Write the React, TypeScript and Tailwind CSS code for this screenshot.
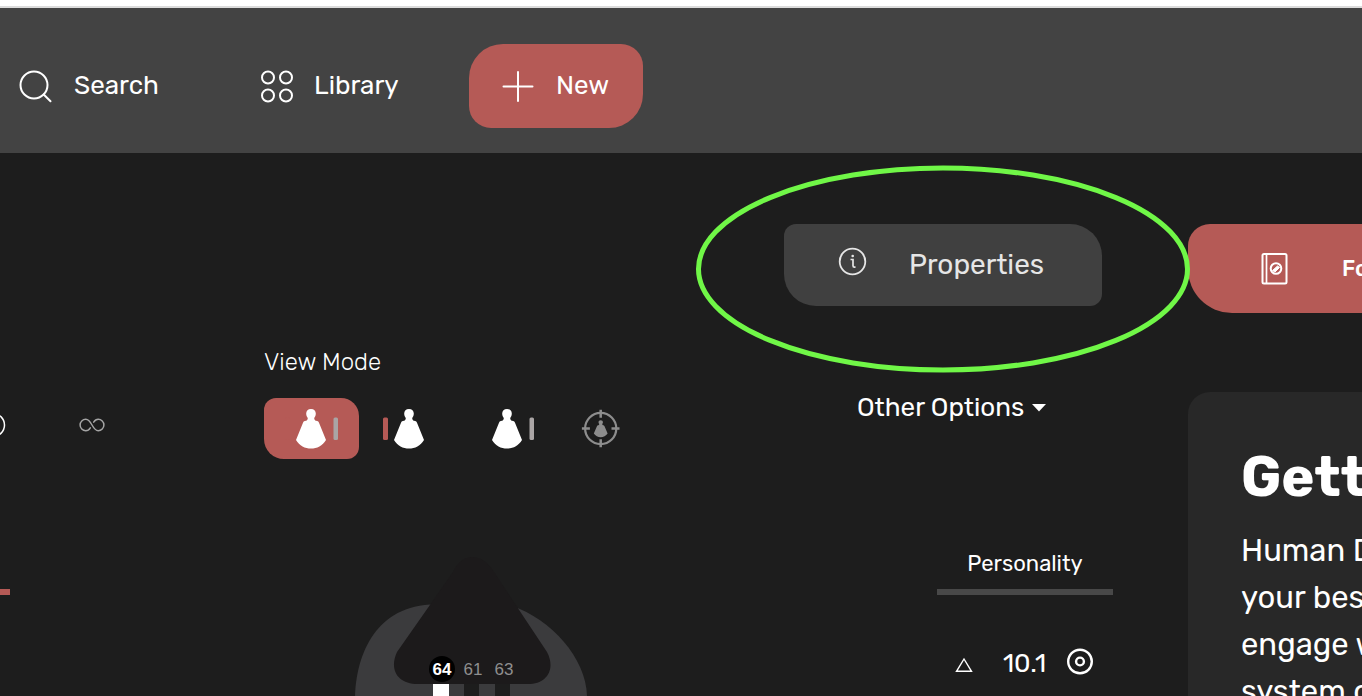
import { clsx } from "clsx";
import { useState } from "react";

// Gown silhouette shared by the view mode buttons, drawn in a 95x61 box
const figurePath =
  "M47 11c-3 0-4.800 2-4.800 4.500 0 1.800.6 3.300 1.600 4.500-.1 1.500-.6 2.400-1.800 2.800-1.600.4-2.400.6-3 1.900L32 42c3.500 5.700 9 8.600 15 8.600s11.500-2.900 15-8.600l-7-17.300c-.6-1.300-1.400-1.500-3-1.900-1.200-.4-1.700-1.300-1.800-2.800 1-1.200 1.600-2.700 1.600-4.500 0-2.500-1.800-4.500-4.800-4.500z";

const viewModes = [
  { id: "both", label: "Design and personality" },
  { id: "design", label: "Design" },
  { id: "personality", label: "Personality" },
  { id: "focus", label: "Focus" },
];

function ViewModeIcon({ id }: { id: string }) {
  if (id === "focus") {
    return (
      <svg viewBox="0 0 95 61" className="h-full w-full" aria-hidden="true">
        <g fill="none" stroke="#8d8d8d">
          <circle cx="42.700" cy="30.500" r="15.600" strokeWidth="2.200" />
          <path
            d="M42.700 11.700v8M42.700 41.300v8M23.900 30.500h8M53.500 30.500h8"
            strokeWidth="2.500"
          />
        </g>
        <g transform="translate(21.100 17.500) scale(0.460 0.430)">
          <path d={figurePath} fill="#8d8d8d" />
        </g>
      </svg>
    );
  }

  return (
    <svg viewBox="0 0 95 61" className="h-full w-full" aria-hidden="true">
      {id !== "personality" && (
        <rect x="21" y="19.500" width="5" height="22.500" rx="1.500" fill="#b55a56" />
      )}
      <path d={figurePath} fill="#fff" />
      {id !== "design" && (
        <rect x="69.500" y="19.500" width="4.500" height="22.500" rx="1.500" fill="#aaa5a5" />
      )}
    </svg>
  );
}

function Header() {
  return (
    <header className="flex h-[145px] items-center bg-[#434343] pt-2.5 pl-[18px]">
      <nav className="flex items-center text-[26px] leading-8">
        <a href="#search" className="flex w-60 items-center gap-5">
          <svg
            viewBox="0 0 36 36"
            className="h-9 w-9"
            fill="none"
            stroke="currentColor"
            strokeWidth="2"
            strokeLinecap="round"
            aria-hidden="true"
          >
            <circle cx="16" cy="17" r="13.500" />
            <path d="M25.700 26.500l6.800 6.800" />
          </svg>
          Search
        </a>
        <a href="#library" className="flex w-[211px] items-center gap-5">
          <svg
            viewBox="0 0 36 36"
            className="h-9 w-9"
            fill="none"
            stroke="currentColor"
            strokeWidth="2"
            aria-hidden="true"
          >
            <circle cx="10" cy="9.500" r="6" />
            <circle cx="28" cy="9.500" r="6" />
            <circle cx="10" cy="27.500" r="6" />
            <circle cx="28" cy="27.500" r="6" />
          </svg>
          Library
        </a>
        <button
          type="button"
          className="flex h-21 w-[174px] items-center gap-5 rounded-tl-[34px] rounded-tr-[22px] rounded-br-[34px] rounded-bl-[22px] bg-[#b55a56] pl-[31px]"
        >
          <svg
            viewBox="0 0 36 36"
            className="h-9 w-9"
            stroke="currentColor"
            strokeWidth="2"
            strokeLinecap="round"
            aria-hidden="true"
          >
            <path d="M18 4v29M3.500 18.500h29" />
          </svg>
          New
        </button>
      </nav>
    </header>
  );
}

function BodyGraph() {
  return (
    <svg viewBox="0 0 252 146" className="ml-20 h-[146px] w-[252px] shrink-0" aria-hidden="true">
      {/* Head outline */}
      <path d="M11 146C12 110 28 58 86 54.500L168 56C207 69 242 108 243 146z" fill="#3b3b3d" />
      {/* Head center */}
      <path
        d="M109 22C118 2 138 2 150 22L203 102C212 119 203 134 184 134H74C53 134 45 119 53 102z"
        fill="#1c1a1b"
      />
      <path d="M89 134h16v12H89z" fill="#fff" />
      <path d="M120 134h15v12h-15zM151 134h15v12h-15z" fill="#1d1d1d" />
      <circle cx="98" cy="119" r="13" fill="#000" />
      <g fontFamily="Liberation Sans, sans-serif" fontSize="17" textAnchor="middle">
        <text x="98" y="125" fill="#fff" fontWeight="700">64</text>
        <text x="129" y="125" fill="#8f8f8f">61</text>
        <text x="160" y="125" fill="#8f8f8f">63</text>
      </g>
    </svg>
  );
}

export default function App() {
  const [mode, setMode] = useState("both");

  return (
    <div className="flex h-screen flex-col overflow-hidden bg-[#1d1d1d] font-[Rubik,Roboto,sans-serif] text-white">
      <div className="h-2 shrink-0 border-b-2 border-[#dcdcdc] bg-white" />
      <Header />

      <div className="flex min-h-0 flex-1">
        {/* Left rail */}
        <section className="flex w-[264px] shrink-0 flex-col pt-[260px]">
          <div className="flex h-6 items-center">
            <svg viewBox="0 0 6 24" className="h-6 w-1.5" fill="none" aria-hidden="true">
              <circle cx="-7" cy="12" r="11.500" stroke="#fff" strokeWidth="1.500" />
            </svg>
            <svg
              viewBox="0 0 26 14"
              className="ml-[73px] h-3.5 w-[26px]"
              fill="none"
              stroke="#a5a5a5"
              strokeWidth="1.500"
              strokeLinecap="round"
              aria-hidden="true"
            >
              <path d="M11.300 9.800C10 11.900 8.500 12.700 6.800 12.700a5.700 5.700 0 0 1 0-11.400c6 0 6.400 11.400 12.400 11.400a5.700 5.700 0 0 0 0-11.400c-1.700 0-3.200.8-4.500 2.900" />
            </svg>
          </div>
          <div className="mt-[152px] h-1.5 w-2.5 bg-[#b55a56]" />
        </section>

        {/* Chart */}
        <section className="flex min-w-0 flex-1 flex-col pt-[193px]">
          <h2 className="text-2xl leading-8 font-light">View Mode</h2>
          <div className="mt-5 flex gap-[3px]">
            {viewModes.map((item) => (
              <button
                key={item.id}
                type="button"
                aria-label={item.label}
                aria-pressed={mode === item.id}
                onClick={() => setMode(item.id)}
                className={clsx(
                  "h-[61px] w-[95px] rounded-tl-xl rounded-tr-[18px] rounded-br-xl rounded-bl-[20px]",
                  mode === item.id && "bg-[#b55a56]"
                )}
              >
                <ViewModeIcon id={item.id} />
              </button>
            ))}
          </div>
          <div className="mt-[91px] flex">
            <BodyGraph />
          </div>
        </section>

        {/* Options */}
        <section className="flex w-[404px] shrink-0 flex-col pt-[71px]">
          <div className="relative w-[318px]">
            <button
              type="button"
              className="flex h-[82px] w-full items-center gap-[41px] rounded-tl-xl rounded-tr-[32px] rounded-br-xl rounded-bl-[32px] bg-[#404040] pl-[54px] text-[28px] text-[#e6e6e6]"
            >
              <svg viewBox="0 0 30 36" className="h-9 w-[30px]" fill="none" stroke="currentColor" aria-hidden="true">
                <circle cx="14.500" cy="14.500" r="12.800" strokeWidth="1.800" />
                <path d="M12.500 12.500h2.500v6.200q0 1.500 1.500 1.500h1" strokeWidth="1.700" />
                <circle cx="14.700" cy="9" r="1.300" fill="currentColor" stroke="none" />
              </svg>
              Properties
            </button>
            {/* Hand-drawn highlight */}
            <svg
              viewBox="0 0 496 210"
              className="pointer-events-none absolute -top-[60px] -left-[89px] h-[210px] w-[496px] max-w-none"
              fill="none"
              aria-hidden="true"
            >
              <ellipse cx="248" cy="105" rx="244.500" ry="101" stroke="#70f747" strokeWidth="5" />
            </svg>
          </div>

          <button type="button" className="mt-[86px] ml-[73px] flex items-center gap-2 text-[26px] leading-8">
            Other Options
            <svg viewBox="0 0 14 8" className="h-2 w-3.5" fill="currentColor" aria-hidden="true">
              <path d="M0 0h14L7 7.500z" />
            </svg>
          </button>

          <div className="mt-[124px] ml-[153px] w-44">
            <h3 className="border-b-6 border-[#484848] pb-[9px] text-center text-[22px] leading-8">Personality</h3>
            <div className="mt-[53px] flex items-center pl-[18px]">
              <svg
                viewBox="0 0 18 18"
                className="h-[18px] w-[18px]"
                fill="none"
                stroke="currentColor"
                strokeWidth="1.400"
                aria-hidden="true"
              >
                <path d="M9 4l7.500 12.300h-15z" />
              </svg>
              <span className="ml-3.5 w-[75px] text-center text-[26px] leading-8">10.1</span>
              <svg
                viewBox="0 0 32 32"
                className="h-8 w-8"
                fill="none"
                stroke="currentColor"
                strokeWidth="2.400"
                aria-hidden="true"
              >
                <circle cx="18" cy="13.500" r="11.800" />
                <circle cx="18" cy="13.500" r="3.900" />
              </svg>
            </div>
          </div>
        </section>

        {/* Sidebar */}
        <aside className="flex w-[174px] shrink-0 flex-col overflow-hidden pt-[71px] whitespace-nowrap">
          <button
            type="button"
            className="flex h-[89px] shrink-0 items-center gap-[52px] rounded-tl-[22px] rounded-bl-[44px] bg-[#b55a56] pl-[72px] text-[22px] leading-8 font-medium"
          >
            <svg
              viewBox="0 0 30 34"
              className="h-[34px] w-[30px] shrink-0"
              fill="none"
              stroke="currentColor"
              strokeWidth="2"
              aria-hidden="true"
            >
              <rect x="2.500" y="2" width="24" height="29.500" rx="1.500" />
              <path d="M6.500 2v29.500" strokeWidth="1.700" />
              <circle cx="16" cy="16.500" r="5.300" />
              <path d="M12.500 18.500l5-4.500 2 1.500-4.500 4.500z" fill="currentColor" strokeWidth="1" />
            </svg>
            Fo
          </button>
          <div className="mt-[79px] flex-1 rounded-tl-[22px] bg-[#282828] pt-[53px] pl-[53px]">
            <h1 className="text-[56px] leading-16 font-bold">Gett</h1>
            <p className="mt-[18px] text-[31px] leading-[47px]">
              Human D
              <br />
              your bes
              <br />
              engage w
              <br />
              system o
            </p>
          </div>
        </aside>
      </div>
    </div>
  );
}
